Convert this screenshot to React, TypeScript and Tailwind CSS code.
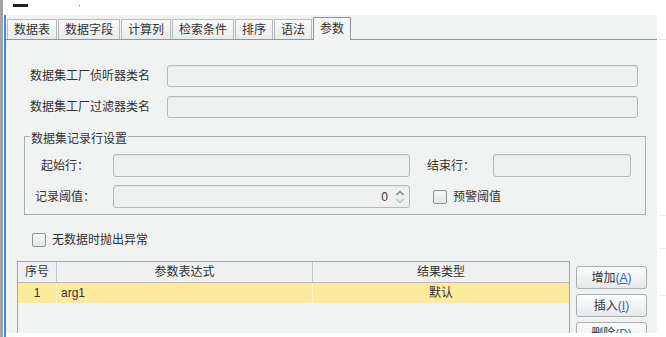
import type { ReactNode } from "react";

const TABS = ["数据表", "数据字段", "计算列", "检索条件", "排序", "语法", "参数"];
const ACTIVE_TAB = "参数";

function Tab({ label, active }: { label: string; active: boolean }) {
  return active ? (
    <div className="mb-[-1px] flex h-[23px] items-center border border-b-0 border-[#8f979c] bg-[#f3f4f4] px-[6px] leading-[12px] text-[#333]">
      {label}
    </div>
  ) : (
    <div className="flex h-[20px] items-center border border-b-0 border-[#b6bbbf] bg-gradient-to-b from-[#fafafa] to-[#e9ebec] px-[6px] leading-[12px] text-[#333]">
      {label}
    </div>
  );
}

function TextBox({ className = "", children }: { className?: string; children?: ReactNode }) {
  return (
    <div
      className={[
        "flex items-center rounded-[3px] border border-[#b3b9bd] bg-[#eff1f1] shadow-[inset_0_1px_1px_rgba(0,0,0,0.06)]",
        className,
      ].join(" ")}
    >
      {children}
    </div>
  );
}

function CheckBox({ label }: { label: string }) {
  return (
    <div className="flex items-center">
      <span className="h-[14px] w-[14px] rounded-[2px] border border-[#8e959a] bg-gradient-to-b from-[#f4f5f5] to-[#e6e8e9]" />
      <span className="ml-[6px] leading-[12px] text-[#333]">{label}</span>
    </div>
  );
}

function ActionButton({ label, mnemonic }: { label: string; mnemonic: string }) {
  return (
    <button
      type="button"
      className="flex h-[23px] w-[71px] shrink-0 items-center justify-center rounded-[3px] border border-[#a8aeb2] bg-gradient-to-b from-[#fdfdfd] to-[#e7e9ea] leading-[12px] text-[#333]"
    >
      {label}
      <span className="text-[#2f66c0]">
        (<span className="underline">{mnemonic}</span>)
      </span>
    </button>
  );
}

export default function App() {
  return (
    <div className="flex h-[337px] w-[666px] overflow-hidden bg-white font-['Liberation_Sans','Noto_Sans_CJK_SC',sans-serif] text-[12px]">
      <div className="h-full w-[3px] shrink-0 bg-[#a2a4a6]" />
      <div className="w-[1px] shrink-0" />

      <div className="flex w-[653px] shrink-0 flex-col">
        {/* clipped caption strip above the tabs */}
        <div className="flex h-[15px] items-start bg-white">
          <span className="ml-[9px] mt-[4px] h-[3px] w-[15px] bg-[#222]" />
          <span className="ml-[51px] mt-[5px] h-[1px] w-[1px] bg-[#d33]" />
        </div>

        <div className="flex flex-1 flex-col border-l-2 border-[#3b8de6]">
          <div className="flex h-[318px] flex-col overflow-hidden bg-[#f1f2f2]">
            {/* tab strip */}
            <div className="flex h-[25px] shrink-0 items-end gap-[1px] border-b border-[#8f979c] pl-[1px]">
              {TABS.map((tab) => (
                <Tab key={tab} label={tab} active={tab === ACTIVE_TAB} />
              ))}
            </div>

            {/* listener / filter class names */}
            <div className="pl-[24px] pt-[25px]">
              <div className="flex items-center">
                <span className="w-[137px] leading-[12px] text-[#333]">数据集工厂侦听器类名</span>
                <TextBox className="h-[22px] w-[471px]" />
              </div>
              <div className="mt-[9px] flex items-center">
                <span className="w-[137px] leading-[12px] text-[#333]">数据集工厂过滤器类名</span>
                <TextBox className="h-[22px] w-[471px]" />
              </div>
            </div>

            {/* record row settings */}
            <div className="relative ml-[18px] mt-[18px] h-[79px] w-[622px] shrink-0 border border-[#a9adb0] pt-[17px]">
              <span className="absolute left-[5px] top-[-4px] bg-[#f1f2f2] px-[1px] leading-[12px] text-[#333]">
                数据集记录行设置
              </span>
              <div className="flex items-center">
                <span className="w-[80px] text-center leading-[12px] text-[#333]">起始行：</span>
                <TextBox className="ml-[8px] h-[23px] w-[297px]" />
                <span className="ml-[17px] w-[66px] leading-[12px] text-[#333]">结束行：</span>
                <TextBox className="h-[23px] w-[138px]" />
              </div>
              <div className="mt-[8px] flex items-center">
                <span className="w-[80px] text-center leading-[12px] text-[#333]">记录阈值：</span>
                <TextBox className="ml-[8px] h-[23px] w-[297px] justify-end pr-[3px]">
                  <span className="leading-[12px] text-[#333]">0</span>
                  <svg width="12" height="16" viewBox="0 0 12 16" className="ml-[6px]">
                    <path d="M2.5 6 L6 2.5 L9.5 6" fill="none" stroke="#7d8387" strokeWidth="1.3" />
                    <path d="M2.5 10 L6 13.5 L9.5 10" fill="none" stroke="#b9bec1" strokeWidth="1.3" />
                  </svg>
                </TextBox>
                <div className="ml-[23px]">
                  <CheckBox label="预警阈值" />
                </div>
              </div>
            </div>

            <div className="ml-[26px] mt-[18px]">
              <CheckBox label="无数据时抛出异常" />
            </div>

            {/* parameter table */}
            <div className="ml-[11px] mt-[14px] flex min-h-0 flex-1">
              <div className="flex w-[553px] flex-col border border-b-0 border-[#a0a7ab] bg-[#f2f3f3]">
                <div className="grid h-[21px] grid-cols-[39px_256px_1fr] border-b border-[#b3babe] bg-[#eef0f1] leading-[12px] text-[#333]">
                  <div className="flex items-center justify-center border-r border-[#c3c8cb]">序号</div>
                  <div className="flex items-center justify-center border-r border-[#c3c8cb]">参数表达式</div>
                  <div className="flex items-center justify-center">结果类型</div>
                </div>
                <div className="grid h-[20px] grid-cols-[39px_256px_1fr] bg-[#fcea9f] leading-[12px] text-[#333]">
                  <div className="flex items-center justify-center border-r border-[#fdf3c8]">1</div>
                  <div className="flex items-center border-r border-[#fdf3c8] pl-[4px]">arg1</div>
                  <div className="flex items-center justify-center">默认</div>
                </div>
              </div>

              <div className="ml-[6px] mt-[5px] flex flex-col gap-[5px]">
                <ActionButton label="增加" mnemonic="A" />
                <ActionButton label="插入" mnemonic="I" />
                <ActionButton label="删除" mnemonic="D" />
              </div>
            </div>
          </div>
        </div>
      </div>

      {/* faint edge of the neighbouring pane */}
      <div className="flex flex-1 flex-col pt-[39px]">
        <div className="ml-[2px] h-[1px] w-[7px] bg-[#e4e6e7]" />
        <div className="ml-[2px] mt-[175px] h-[1px] w-[7px] bg-[#eceeef]" />
        <div className="ml-[2px] mt-[32px] h-[1px] w-[7px] bg-[#eceeef]" />
        <div className="ml-[2px] mt-[46px] h-[1px] w-[7px] bg-[#eceeef]" />
      </div>
    </div>
  );
}
